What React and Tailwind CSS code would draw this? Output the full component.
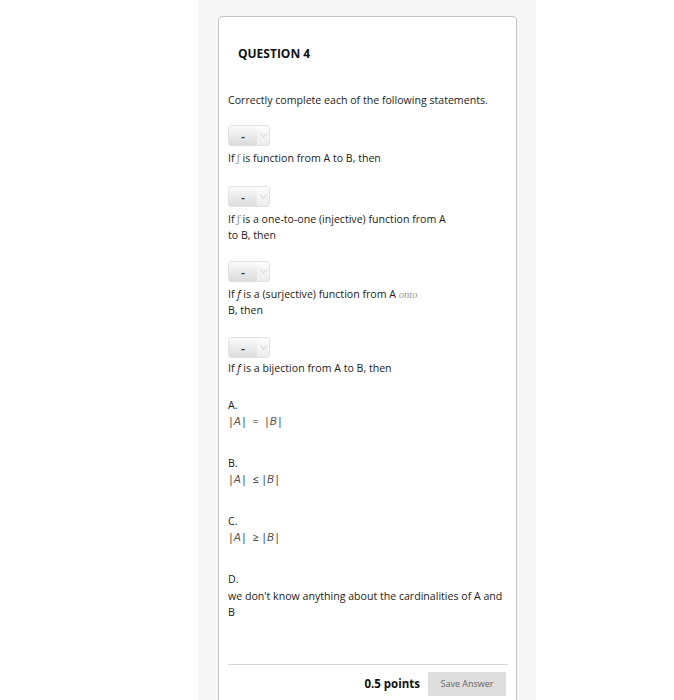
import React from "react";

function Sel() {
  return (
    <div className="flex h-[21px] w-[42px] overflow-hidden rounded-[3px] border border-[#e2e2e2] bg-gradient-to-b from-[#fafafa] to-[#dcdcdc]">
      <div className="flex w-[28px] items-center justify-center text-[11px] font-bold leading-none text-[#333]">-</div>
      <div className="flex flex-1 items-center justify-center bg-gradient-to-b from-[#fdfdfd] to-[#ececec]">
        <svg width="7" height="5" viewBox="0 0 7 5"><path d="M0.5 0.5 L3.5 4.5 L6.5 0.5" fill="none" stroke="#d0d0d0" strokeWidth="1"/></svg>
      </div>
    </div>
  );
}

const fSerif = <span className="mx-[2px] inline-block leading-none text-[#999]" style={{ fontFamily: '"DejaVu Serif", serif' }}>ƒ</span>;
const fIt = <span className="italic">f</span>;
const M = ({ children }) => <span className="italic text-[#555]" style={{ fontFamily: '"DejaVu Sans", sans-serif' }}>{children}</span>;

export default function App() {
  return (
    <div className="min-h-[700px] bg-white" style={{ fontFamily: '"Open Sans", sans-serif' }}>
      <div className="ml-[198px] w-[338px] bg-[#f7f7f7] pt-[16px]">
        <div className="ml-[20px] h-[700px] w-[299px] rounded-t-[4px] border border-[#c4c4c4] bg-white pl-[9px] pr-[8px] text-[10.6px] leading-[16px] text-[#222]">
          <div className="mt-[29px] pl-[10px] text-[12px] font-bold text-[#111]">QUESTION 4</div>
          <div className="mt-[30px]">Correctly complete each of the following statements.</div>

          <div className="mt-[17px]"><Sel /></div>
          <div className="mt-[4px]">If{fSerif}is function from A to B, then</div>

          <div className="mt-[20px]"><Sel /></div>
          <div className="mt-[4px] w-[226px]">If{fSerif}is a one-to-one (injective) function from A to B, then</div>

          <div className="mt-[18px]"><Sel /></div>
          <div className="mt-[4px] w-[198px]">If {fIt} is a (surjective) function from A <span className="inline-block italic leading-none text-[#999]" style={{ fontFamily: '"Liberation Serif", serif' }}>onto</span> B, then</div>

          <div className="mt-[19px]"><Sel /></div>
          <div className="mt-[2px]">If {fIt} is a bijection from A to B, then</div>

          <div className="mt-[21px]">A.</div>
          <div>|<M>A</M>| &nbsp;=&nbsp; |<M>B</M>|</div>

          <div className="mt-[26px]">B.</div>
          <div>|<M>A</M>| &nbsp;≤ |<M>B</M>|</div>

          <div className="mt-[26px]">C.</div>
          <div>|<M>A</M>| &nbsp;≥ |<M>B</M>|</div>

          <div className="mt-[26px]">D.</div>
          <div className="mt-[1px] w-[278px]">we don't know anything about the cardinalities of A and B</div>

          <div className="mt-[44px] border-t border-[#d4d4d4]"></div>
          <div className="mt-[7px] flex items-center justify-end gap-[8px] pr-[2px]">
            <span className="text-[11.5px] font-bold text-[#111]">0.5 points</span>
            <div className="flex h-[24px] w-[78px] items-center justify-center bg-[#dedede] text-[9px] text-[#666]">Save Answer</div>
          </div>
        </div>
      </div>
    </div>
  );
}
